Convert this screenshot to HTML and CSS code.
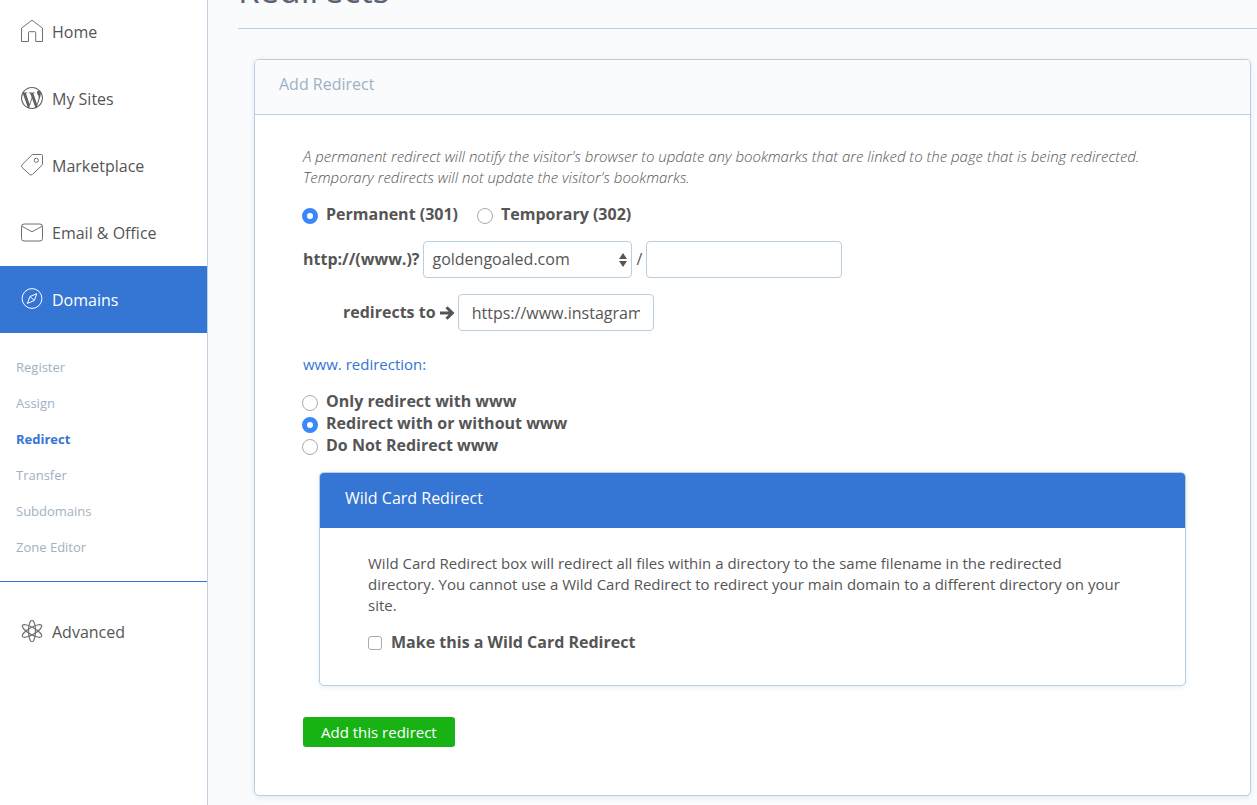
FILE: index.html
```html
<!DOCTYPE html>
<html lang="en">
<head>
    <meta charset="UTF-8" />
    <title>Redirects</title>
    <link rel="stylesheet" href="styles.css">
</head>
<body>

<aside class="sidebar">
    <nav>
        <a class="nav-item" href="#">
            <svg class="icon" viewBox="0 0 22 22"><path d="M.5 21.500V8.200L10 .9q1-.8 2 0l9.500 7.300v13.300h-6.800V12.500q0-.8-.8-.8H8.300q-.8 0-.8.800v9z"/></svg>
            Home
        </a>
        <a class="nav-item" href="#">
            <svg class="icon icon-solid" viewBox="0 0 24 24"><path d="M21.469 6.825c.84 1.537 1.318 3.3 1.318 5.175 0 3.979-2.156 7.456-5.363 9.325l3.295-9.527c.615-1.54.82-2.771.82-3.864 0-.405-.026-.78-.07-1.11m-7.981.105c.647-.03 1.232-.105 1.232-.105.582-.075.514-.93-.067-.899 0 0-1.755.135-2.88.135-1.064 0-2.85-.15-2.85-.15-.585-.03-.661.855-.075.885 0 0 .54.061 1.125.09l1.68 4.605-2.37 7.08L5.354 6.9c.649-.03 1.234-.1 1.234-.1.585-.075.516-.93-.065-.896 0 0-1.746.138-2.874.138-.2 0-.438-.008-.69-.015C4.911 3.15 8.235 1.215 12 1.215c2.809 0 5.365 1.072 7.286 2.833-.046-.003-.091-.009-.141-.009-1.06 0-1.812.923-1.812 1.914 0 .89.513 1.643 1.06 2.531.411.72.89 1.643.89 2.977 0 .915-.354 1.994-.821 3.479l-1.075 3.585-3.9-11.61.001.014zM12 22.784c-1.059 0-2.081-.153-3.048-.437l3.237-9.406 3.315 9.087c.024.053.05.101.078.149-1.12.393-2.325.609-3.582.609M1.211 12c0-1.564.336-3.05.935-4.39L7.29 21.709C3.694 19.96 1.212 16.271 1.211 12M12 0C5.385 0 0 5.385 0 12s5.385 12 12 12 12-5.385 12-12S18.615 0 12 0"/></svg>
            My Sites
        </a>
        <a class="nav-item" href="#">
            <svg class="icon" viewBox="0 0 22 22"><path d="M11.300.5h9.200q1 0 1 1v8.500q0 .7-.5 1.200l-9.500 9.200q-1.500 1.200-3 0L1 13.400q-1-1.300 0-2.600z"/><circle cx="15.300" cy="6.300" r="2.100"/></svg>
            Marketplace
        </a>
        <a class="nav-item" href="#">
            <svg class="icon" viewBox="0 0 22 22"><rect x=".5" y="3" width="21" height="17" rx="2.500"/><path d="M1 5.300l10 5.500 10-5.500"/></svg>
            Email &amp; Office
        </a>
        <a class="nav-item active" href="#">
            <svg class="icon" viewBox="0 0 22 22"><circle cx="11" cy="10.500" r="9.900"/><path d="M15.800 5.700L13.300 12.500l-7 3L9 8.500z"/><path d="M9 8.500l4.300 4"/></svg>
            Domains
        </a>
        <div class="subnav">
            <a href="#">Register</a>
            <a href="#">Assign</a>
            <a class="current" href="#">Redirect</a>
            <a href="#">Transfer</a>
            <a href="#">Subdomains</a>
            <a href="#">Zone Editor</a>
        </div>
        <a class="nav-item" href="#">
            <svg class="icon icon-atom" viewBox="0 0 22 22"><ellipse cx="11" cy="11" rx="3.500" ry="10.800"/><ellipse cx="11" cy="11" rx="3.500" ry="11" transform="rotate(60 11 11)"/><ellipse cx="11" cy="11" rx="3.500" ry="11" transform="rotate(120 11 11)"/></svg>
            Advanced
        </a>
    </nav>
</aside>

<main class="content">
    <h1>Redirects</h1>

    <section class="card">
        <h2 class="card-header">Add Redirect</h2>
        <form class="card-body">
            <p class="note">A permanent redirect will notify the visitor's browser to update any bookmarks that are linked to the page that is being redirected. Temporary redirects will not update the visitor's bookmarks.</p>

            <div class="type-row">
                <label class="choice"><input type="radio" name="type" checked>Permanent (301)</label>
                <label class="choice"><input type="radio" name="type">Temporary (302)</label>
            </div>

            <div class="url-row">
                <label for="domain">http://(www.)?</label>
                <span class="select-wrap">
                    <select id="domain"><option>goldengoaled.com</option></select>
                    <svg class="arrows" viewBox="0 0 8 14"><path d="M4 0l4 6H0zM4 14L0 8h8z"/></svg>
                </span>
                <span>/</span>
                <input class="text" type="text" aria-label="Path">
            </div>

            <div class="url-row indent">
                <label for="target">redirects to
                    <svg class="arrow" viewBox="0 0 14 14"><path d="M0 7h12M6.500 1.200L12.300 7l-5.800 5.800"/></svg>
                </label>
                <input class="text" id="target" type="text" value="https://www.instagram.com/">
            </div>

            <a class="help" href="#">www. redirection:</a>

            <div class="www-list">
                <label class="choice"><input type="radio" name="www">Only redirect with www</label>
                <label class="choice"><input type="radio" name="www" checked>Redirect with or without www</label>
                <label class="choice"><input type="radio" name="www">Do Not Redirect www</label>
            </div>

            <section class="card wildcard">
                <h3 class="card-header">Wild Card Redirect</h3>
                <div class="card-body">
                    <p>Wild Card Redirect box will redirect all files within a directory to the same filename in the redirected directory. You cannot use a Wild Card Redirect to redirect your main domain to a different directory on your site.</p>
                    <label class="choice"><input type="checkbox">Make this a Wild Card Redirect</label>
                </div>
            </section>

            <button class="btn" type="submit">Add this redirect</button>
        </form>
    </section>
</main>

</body>
</html>
```
FILE: styles.css
```css
* {
    box-sizing: border-box;
}

body {
    display: flex;
    min-height: 100vh;
    margin: 0;
    background-color: #f9fbfd;
    color: #555;
    font-family: "Open Sans", sans-serif;
    font-size: 15px;
    line-height: 21px;
}

a {
    color: #3575d3;
    text-decoration: none;
}

p {
    margin: 0;
}

.sidebar {
    flex: 0 0 208px;
    background-color: #fff;
    border-right: 1px solid #c1cfdf;
    overflow: hidden;
}

.sidebar nav {
    margin-top: -2px;
}

.nav-item {
    display: flex;
    align-items: center;
    gap: 9px;
    height: 67px;
    padding: 2px 0 0 21px;
    color: #555;
    font-size: 16px;
}

.nav-item.active {
    background-color: #3575d3;
    color: #fff;
}

.icon {
    width: 22px;
    height: 22px;
    margin-bottom: 3px;
    fill: none;
    stroke: #707070;
    stroke-width: 1;
}

.active .icon {
    stroke: #fff;
}

.icon-solid {
    fill: #606060;
    stroke: none;
}

.icon-atom {
    stroke-width: 1.2;
}

.subnav {
    padding: 16px 0;
    margin-bottom: 16px;
    border-bottom: 1px solid #3575d3;
}

.subnav a {
    display: block;
    padding-left: 16px;
    color: #9fb1c1;
    font-size: 13px;
    line-height: 36px;
}

.subnav .current {
    color: #3575d3;
    font-weight: bold;
}

.content {
    flex: 1;
    min-width: 0;
    padding-left: 30px;
    overflow: hidden;
}

h1 {
    margin: -32px 0 30px;
    padding-bottom: 16px;
    border-bottom: 1px solid #b9cfe0;
    color: #5a6475;
    font-size: 35px;
    font-weight: normal;
    line-height: 44px;
}

.card {
    margin: 0 6px 8px 16px;
    background-color: #fff;
    border: 1px solid #b9cfe0;
    border-radius: 5px;
    box-shadow: 0 1px 5px rgba(70, 130, 180, 0.15);
    overflow: hidden;
}

.card-header {
    height: 55px;
    margin: 0;
    padding: 14px 24px;
    background-color: #f9fbfd;
    border-bottom: 1px solid #b9cfe0;
    color: #9fb1c1;
    font-size: 16px;
    font-weight: normal;
}

.card-body {
    padding: 31px 48px 48px;
}

.note {
    font-style: italic;
    font-weight: 300;
}

.type-row {
    display: flex;
    gap: 20px;
    margin: 15px 0 16px;
}

.choice {
    display: flex;
    gap: 8px;
    font-size: 16px;
    font-weight: bold;
    line-height: 22px;
}

.choice input {
    appearance: none;
    width: 16px;
    height: 16px;
    margin: 5px 0 0 -1px;
    background-color: #fff;
    border: 1px solid #aaa;
    border-radius: 50%;
}

.choice input:checked {
    border: 5px solid #3b88fd;
}

.choice input[type="checkbox"] {
    width: 14px;
    height: 14px;
    margin: 5px 1px 0 0;
    border-radius: 3px;
}

.url-row {
    display: flex;
    align-items: center;
    gap: 4px;
    margin-bottom: 16px;
    font-size: 16px;
}

.url-row.indent {
    padding-left: 40px;
}

.url-row label {
    font-weight: bold;
}

.select-wrap {
    position: relative;
}

.text,
select {
    height: 37px;
    background-color: #fff;
    border: 1px solid #b9cfe0;
    border-radius: 4px;
    color: #555;
    font: inherit;
}

.text {
    width: 196px;
    padding: 0 13px;
}

select {
    display: block;
    width: 209px;
    padding: 0 8px;
    appearance: none;
}

.arrows {
    position: absolute;
    top: 12px;
    right: 5px;
    width: 8px;
    height: 14px;
    fill: #555;
    pointer-events: none;
}

.arrow {
    width: 14px;
    height: 14px;
    vertical-align: -2px;
    fill: none;
    stroke: #555;
    stroke-width: 3;
}

.help {
    display: block;
    margin: 23px 0 15px;
}

.wildcard {
    margin: 16px 16px 31px;
}

.wildcard .card-header {
    padding: 15px 25px;
    background-color: #3575d3;
    border-bottom: 0;
    color: #fff;
}

.wildcard .card-body {
    padding: 25px 56px 32px 48px;
}

.wildcard p {
    margin-bottom: 15px;
}

.btn {
    display: block;
    height: 30px;
    padding: 0 18px;
    background-color: #18b215;
    border: none;
    border-radius: 3px;
    color: #fff;
    font: inherit;
    cursor: pointer;
}
```
